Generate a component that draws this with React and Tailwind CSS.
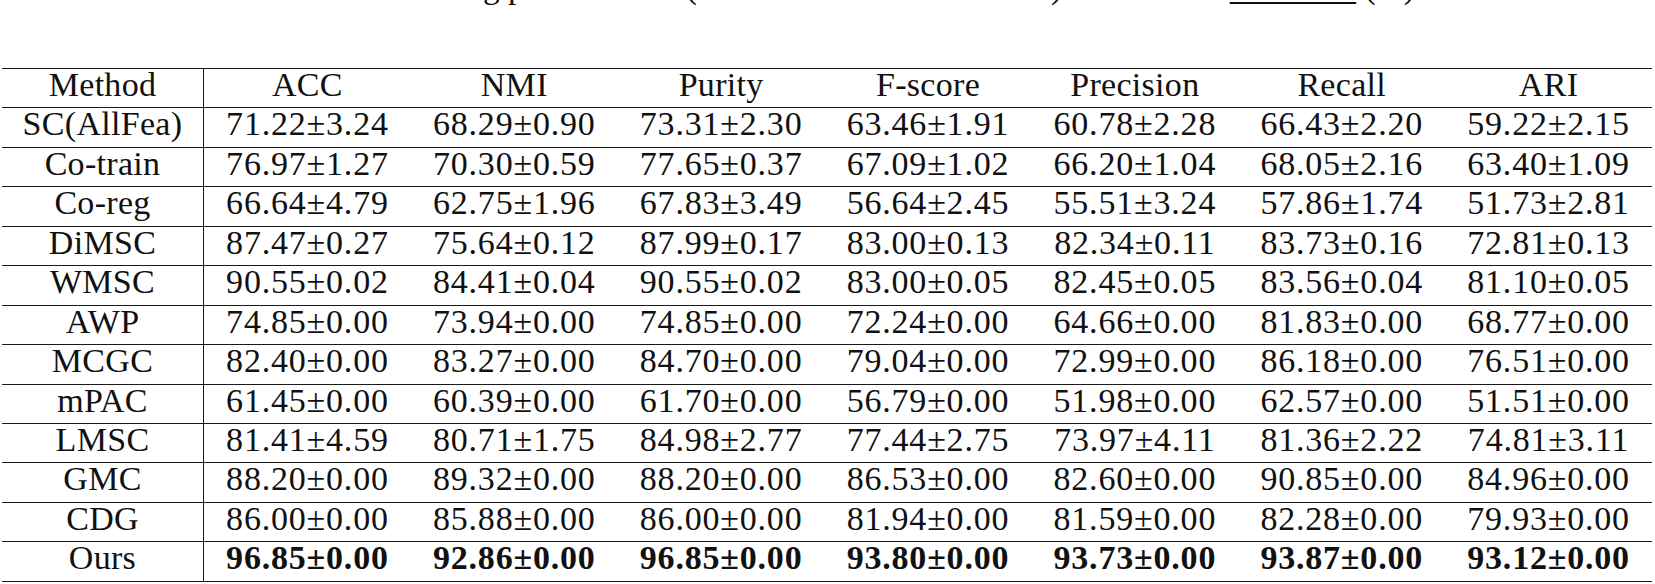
const columns = ['ACC', 'NMI', 'Purity', 'F-score', 'Precision', 'Recall', 'ARI']

const rows = [
  ['SC(AllFea)', '71.22±3.24', '68.29±0.90', '73.31±2.30', '63.46±1.91', '60.78±2.28', '66.43±2.20', '59.22±2.15'],
  ['Co-train', '76.97±1.27', '70.30±0.59', '77.65±0.37', '67.09±1.02', '66.20±1.04', '68.05±2.16', '63.40±1.09'],
  ['Co-reg', '66.64±4.79', '62.75±1.96', '67.83±3.49', '56.64±2.45', '55.51±3.24', '57.86±1.74', '51.73±2.81'],
  ['DiMSC', '87.47±0.27', '75.64±0.12', '87.99±0.17', '83.00±0.13', '82.34±0.11', '83.73±0.16', '72.81±0.13'],
  ['WMSC', '90.55±0.02', '84.41±0.04', '90.55±0.02', '83.00±0.05', '82.45±0.05', '83.56±0.04', '81.10±0.05'],
  ['AWP', '74.85±0.00', '73.94±0.00', '74.85±0.00', '72.24±0.00', '64.66±0.00', '81.83±0.00', '68.77±0.00'],
  ['MCGC', '82.40±0.00', '83.27±0.00', '84.70±0.00', '79.04±0.00', '72.99±0.00', '86.18±0.00', '76.51±0.00'],
  ['mPAC', '61.45±0.00', '60.39±0.00', '61.70±0.00', '56.79±0.00', '51.98±0.00', '62.57±0.00', '51.51±0.00'],
  ['LMSC', '81.41±4.59', '80.71±1.75', '84.98±2.77', '77.44±2.75', '73.97±4.11', '81.36±2.22', '74.81±3.11'],
  ['GMC', '88.20±0.00', '89.32±0.00', '88.20±0.00', '86.53±0.00', '82.60±0.00', '90.85±0.00', '84.96±0.00'],
  ['CDG', '86.00±0.00', '85.88±0.00', '86.00±0.00', '81.94±0.00', '81.59±0.00', '82.28±0.00', '79.93±0.00'],
  ['Ours', '96.85±0.00', '92.86±0.00', '96.85±0.00', '93.80±0.00', '93.73±0.00', '93.87±0.00', '93.12±0.00'],
]

function Row({ cells, bold, head }) {
  return (
    <div className="grid grid-cols-[202px_repeat(7,1fr)] h-[39.44px] border-b border-[#1a1a1a]">
      {cells.map((c, i) => (
        <div
          key={i}
          className={
            'text-center leading-[31px] whitespace-nowrap ' +
            (i === 0 ? 'border-r border-[#1a1a1a] tracking-[0.3px] ' : head ? 'tracking-[0.3px] ' : 'tracking-[0.8px] ') +
            (bold && i > 0 ? 'font-bold' : '')
          }
        >
          {c}
        </div>
      ))}
    </div>
  )
}

export default function App() {
  return (
    <div
      className="w-[1655px] h-[584px] bg-white text-[#111] text-[34px] overflow-hidden"
      style={{ fontFamily: '"Liberation Serif", "Times New Roman", serif' }}
    >
      {/* caption, clipped at the top of the shot */}
      <div className="h-[68px] overflow-hidden">
        <p className="-mt-[31px] text-[33.5px] leading-[36px] pl-[191px] whitespace-nowrap">
          Table 3: The clustering performance (mean ± standard deviation) in bold and{' '}
          <span className="underline underline-offset-[4px] decoration-[1.5px]">underline</span> (%)
        </p>
      </div>

      <div className="ml-[2px] w-[1650px] border-t border-[#1a1a1a]">
        <Row cells={['Method', ...columns]} head />
        {rows.map((r, i) => (
          <Row key={r[0]} cells={r} bold={i === rows.length - 1} />
        ))}
      </div>
    </div>
  )
}
